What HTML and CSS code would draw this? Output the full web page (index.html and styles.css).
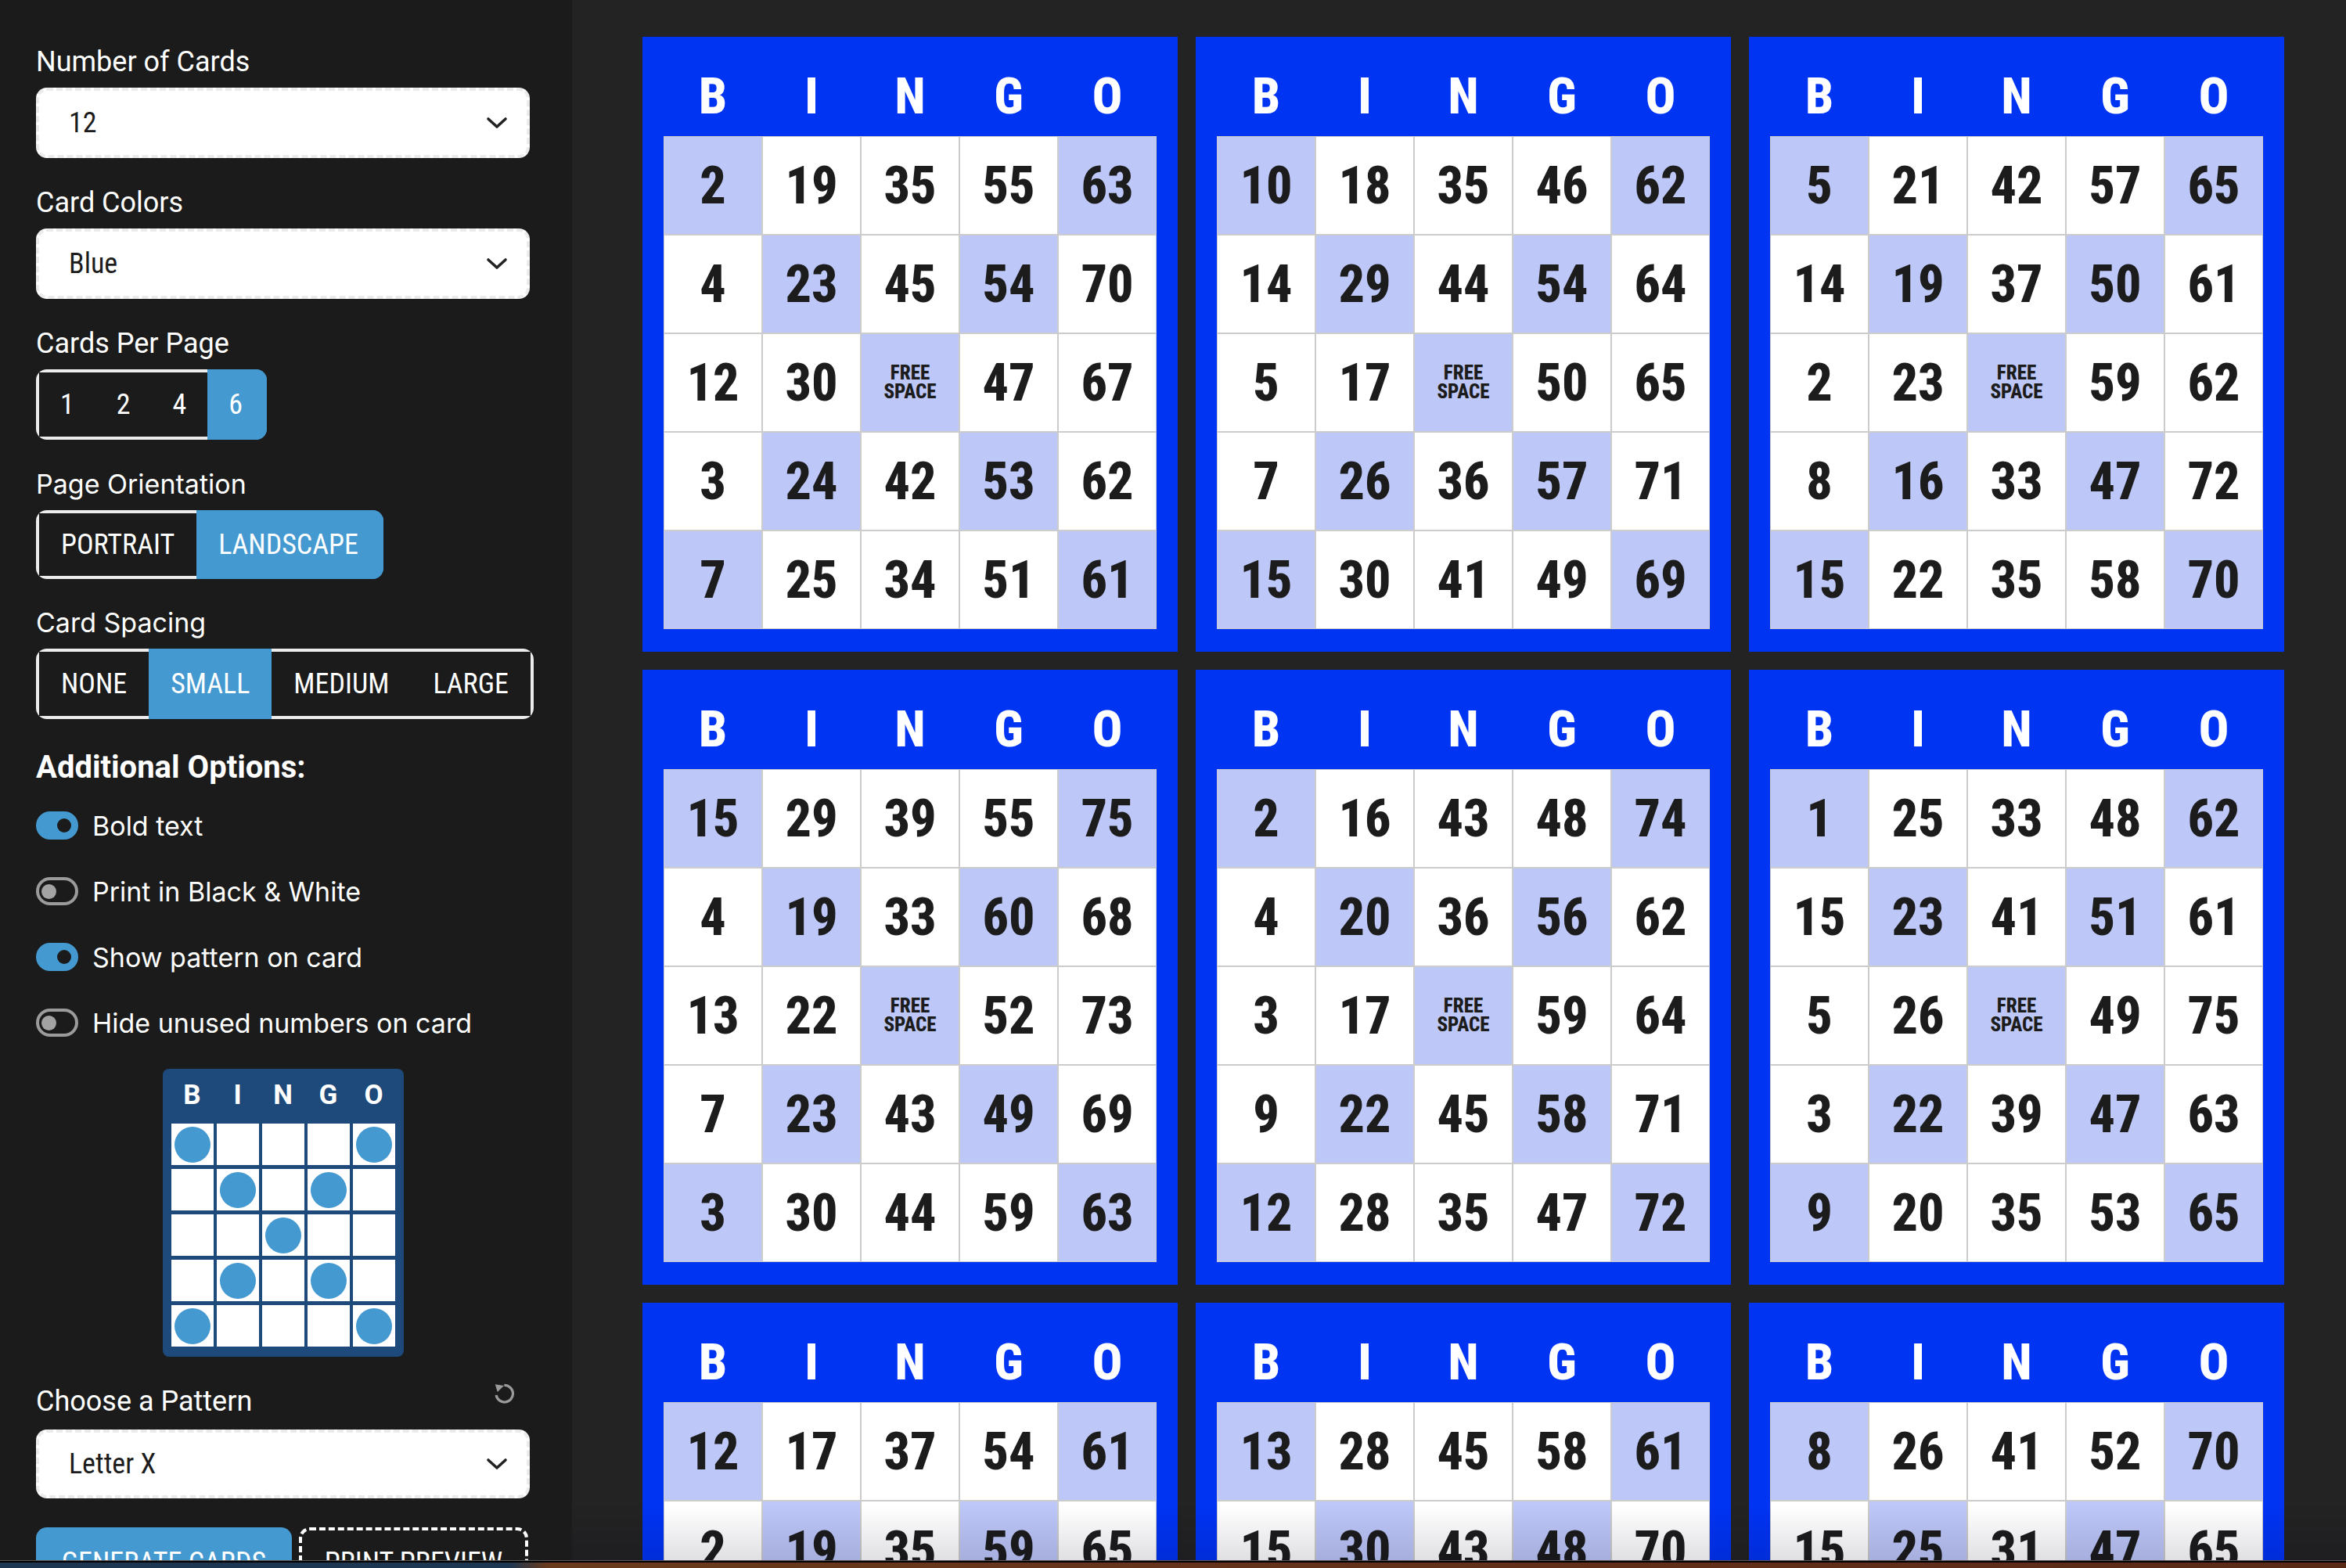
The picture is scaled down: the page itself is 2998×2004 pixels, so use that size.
FILE: index.html
```html
<!DOCTYPE html>
<html lang="en">
<head>
<meta charset="utf-8">
<title>Bingo Card Generator</title>
<link rel="stylesheet" href="styles.css">
</head>
<body>
<div class="app">
  <aside class="sidebar">
    <div class="field">
      <div class="label">Number of Cards</div>
      <div class="select"><span>12</span><svg class="chev" viewBox="0 0 28 16"><polyline points="3,3 14,13 25,3"/></svg></div>
    </div>
    <div class="field">
      <div class="label">Card Colors</div>
      <div class="select"><span>Blue</span><svg class="chev" viewBox="0 0 28 16"><polyline points="3,3 14,13 25,3"/></svg></div>
    </div>
    <div class="field">
      <div class="label">Cards Per Page</div>
      <div class="seg seg-num"><div class="b">1</div><div class="b">2</div><div class="b">4</div><div class="b on">6</div></div>
    </div>
    <div class="field field-tight">
      <div class="label inter">Page Orientation</div>
      <div class="seg seg-short"><div class="b">PORTRAIT</div><div class="b on">LANDSCAPE</div></div>
    </div>
    <div class="field field-wide">
      <div class="label inter">Card Spacing</div>
      <div class="seg"><div class="b">NONE</div><div class="b on">SMALL</div><div class="b">MEDIUM</div><div class="b">LARGE</div></div>
    </div>
    <div class="heading">Additional Options:</div>
    <div class="options">
      <div class="opt"><div class="tog on"><div class="knob"></div></div><span>Bold text</span></div>
      <div class="opt"><div class="tog"><div class="knob"></div></div><span>Print in Black &amp; White</span></div>
      <div class="opt"><div class="tog on"><div class="knob"></div></div><span>Show pattern on card</span></div>
      <div class="opt"><div class="tog"><div class="knob"></div></div><span>Hide unused numbers on card</span></div>
    </div>
    <div class="pattern">
      <div class="p-head"><span>B</span><span>I</span><span>N</span><span>G</span><span>O</span></div>
      <div class="p-grid">
        <div class="pc d"></div><div class="pc"></div><div class="pc"></div><div class="pc"></div><div class="pc d"></div>
        <div class="pc"></div><div class="pc d"></div><div class="pc"></div><div class="pc d"></div><div class="pc"></div>
        <div class="pc"></div><div class="pc"></div><div class="pc d"></div><div class="pc"></div><div class="pc"></div>
        <div class="pc"></div><div class="pc d"></div><div class="pc"></div><div class="pc d"></div><div class="pc"></div>
        <div class="pc d"></div><div class="pc"></div><div class="pc"></div><div class="pc"></div><div class="pc d"></div>
      </div>
    </div>
    <div class="label-row">
      <div class="label">Choose a Pattern</div>
      <svg class="reset" viewBox="0 0 24 24"><path d="M11.5 3.6 A8.6 8.6 0 1 1 3.3 13.6"/><polygon points="2.2,2.6 11.2,3.9 4.6,10.4"/></svg>
    </div>
    <div class="select"><span>Letter X</span><svg class="chev" viewBox="0 0 28 16"><polyline points="3,3 14,13 25,3"/></svg></div>
    <div class="actions">
      <div class="btn primary">GENERATE CARDS</div>
      <div class="btn ghost">PRINT PREVIEW</div>
    </div>
  </aside>

  <main class="main">
    <div class="cards">
      <div class="card">
        <div class="head"><span>B</span><span>I</span><span>N</span><span>G</span><span>O</span></div>
        <div class="grid">
          <div class="c h">2</div><div class="c">19</div><div class="c">35</div><div class="c">55</div><div class="c h">63</div>
          <div class="c">4</div><div class="c h">23</div><div class="c">45</div><div class="c h">54</div><div class="c">70</div>
          <div class="c">12</div><div class="c">30</div><div class="c h free">FREE<br>SPACE</div><div class="c">47</div><div class="c">67</div>
          <div class="c">3</div><div class="c h">24</div><div class="c">42</div><div class="c h">53</div><div class="c">62</div>
          <div class="c h">7</div><div class="c">25</div><div class="c">34</div><div class="c">51</div><div class="c h">61</div>
        </div>
      </div>
      <div class="card">
        <div class="head"><span>B</span><span>I</span><span>N</span><span>G</span><span>O</span></div>
        <div class="grid">
          <div class="c h">10</div><div class="c">18</div><div class="c">35</div><div class="c">46</div><div class="c h">62</div>
          <div class="c">14</div><div class="c h">29</div><div class="c">44</div><div class="c h">54</div><div class="c">64</div>
          <div class="c">5</div><div class="c">17</div><div class="c h free">FREE<br>SPACE</div><div class="c">50</div><div class="c">65</div>
          <div class="c">7</div><div class="c h">26</div><div class="c">36</div><div class="c h">57</div><div class="c">71</div>
          <div class="c h">15</div><div class="c">30</div><div class="c">41</div><div class="c">49</div><div class="c h">69</div>
        </div>
      </div>
      <div class="card">
        <div class="head"><span>B</span><span>I</span><span>N</span><span>G</span><span>O</span></div>
        <div class="grid">
          <div class="c h">5</div><div class="c">21</div><div class="c">42</div><div class="c">57</div><div class="c h">65</div>
          <div class="c">14</div><div class="c h">19</div><div class="c">37</div><div class="c h">50</div><div class="c">61</div>
          <div class="c">2</div><div class="c">23</div><div class="c h free">FREE<br>SPACE</div><div class="c">59</div><div class="c">62</div>
          <div class="c">8</div><div class="c h">16</div><div class="c">33</div><div class="c h">47</div><div class="c">72</div>
          <div class="c h">15</div><div class="c">22</div><div class="c">35</div><div class="c">58</div><div class="c h">70</div>
        </div>
      </div>
      <div class="card">
        <div class="head"><span>B</span><span>I</span><span>N</span><span>G</span><span>O</span></div>
        <div class="grid">
          <div class="c h">15</div><div class="c">29</div><div class="c">39</div><div class="c">55</div><div class="c h">75</div>
          <div class="c">4</div><div class="c h">19</div><div class="c">33</div><div class="c h">60</div><div class="c">68</div>
          <div class="c">13</div><div class="c">22</div><div class="c h free">FREE<br>SPACE</div><div class="c">52</div><div class="c">73</div>
          <div class="c">7</div><div class="c h">23</div><div class="c">43</div><div class="c h">49</div><div class="c">69</div>
          <div class="c h">3</div><div class="c">30</div><div class="c">44</div><div class="c">59</div><div class="c h">63</div>
        </div>
      </div>
      <div class="card">
        <div class="head"><span>B</span><span>I</span><span>N</span><span>G</span><span>O</span></div>
        <div class="grid">
          <div class="c h">2</div><div class="c">16</div><div class="c">43</div><div class="c">48</div><div class="c h">74</div>
          <div class="c">4</div><div class="c h">20</div><div class="c">36</div><div class="c h">56</div><div class="c">62</div>
          <div class="c">3</div><div class="c">17</div><div class="c h free">FREE<br>SPACE</div><div class="c">59</div><div class="c">64</div>
          <div class="c">9</div><div class="c h">22</div><div class="c">45</div><div class="c h">58</div><div class="c">71</div>
          <div class="c h">12</div><div class="c">28</div><div class="c">35</div><div class="c">47</div><div class="c h">72</div>
        </div>
      </div>
      <div class="card">
        <div class="head"><span>B</span><span>I</span><span>N</span><span>G</span><span>O</span></div>
        <div class="grid">
          <div class="c h">1</div><div class="c">25</div><div class="c">33</div><div class="c">48</div><div class="c h">62</div>
          <div class="c">15</div><div class="c h">23</div><div class="c">41</div><div class="c h">51</div><div class="c">61</div>
          <div class="c">5</div><div class="c">26</div><div class="c h free">FREE<br>SPACE</div><div class="c">49</div><div class="c">75</div>
          <div class="c">3</div><div class="c h">22</div><div class="c">39</div><div class="c h">47</div><div class="c">63</div>
          <div class="c h">9</div><div class="c">20</div><div class="c">35</div><div class="c">53</div><div class="c h">65</div>
        </div>
      </div>
      <div class="card">
        <div class="head"><span>B</span><span>I</span><span>N</span><span>G</span><span>O</span></div>
        <div class="grid">
          <div class="c h">12</div><div class="c">17</div><div class="c">37</div><div class="c">54</div><div class="c h">61</div>
          <div class="c">2</div><div class="c h">19</div><div class="c">35</div><div class="c h">59</div><div class="c">65</div>
          <div class="c">9</div><div class="c">24</div><div class="c h free">FREE<br>SPACE</div><div class="c">51</div><div class="c">70</div>
          <div class="c">6</div><div class="c h">28</div><div class="c">40</div><div class="c h">48</div><div class="c">66</div>
          <div class="c h">14</div><div class="c">21</div><div class="c">42</div><div class="c">57</div><div class="c h">73</div>
        </div>
      </div>
      <div class="card">
        <div class="head"><span>B</span><span>I</span><span>N</span><span>G</span><span>O</span></div>
        <div class="grid">
          <div class="c h">13</div><div class="c">28</div><div class="c">45</div><div class="c">58</div><div class="c h">61</div>
          <div class="c">15</div><div class="c h">30</div><div class="c">43</div><div class="c h">48</div><div class="c">70</div>
          <div class="c">4</div><div class="c">18</div><div class="c h free">FREE<br>SPACE</div><div class="c">55</div><div class="c">68</div>
          <div class="c">10</div><div class="c h">27</div><div class="c">38</div><div class="c h">46</div><div class="c">64</div>
          <div class="c h">1</div><div class="c">20</div><div class="c">33</div><div class="c">52</div><div class="c h">75</div>
        </div>
      </div>
      <div class="card">
        <div class="head"><span>B</span><span>I</span><span>N</span><span>G</span><span>O</span></div>
        <div class="grid">
          <div class="c h">8</div><div class="c">26</div><div class="c">41</div><div class="c">52</div><div class="c h">70</div>
          <div class="c">15</div><div class="c h">25</div><div class="c">31</div><div class="c h">47</div><div class="c">65</div>
          <div class="c">3</div><div class="c">18</div><div class="c h free">FREE<br>SPACE</div><div class="c">56</div><div class="c">72</div>
          <div class="c">11</div><div class="c h">29</div><div class="c">44</div><div class="c h">60</div><div class="c">67</div>
          <div class="c h">6</div><div class="c">16</div><div class="c">39</div><div class="c">49</div><div class="c h">62</div>
        </div>
      </div>
    </div>
  </main>
</div>
<div class="dock-shade"></div>
<div class="desktop"></div>
</body>
</html>
```

FILE: styles.css
```css
html, body {
  margin: 0;
  height: 100%;
  overflow: hidden;
  background: #232323;
}

.app {
  display: flex;
  height: 2004px;
}

/* ---------- sidebar ---------- */
.sidebar {
  width: 731px;
  flex: none;
  box-sizing: border-box;
  background: #1b1b1b;
  padding: 57px 54px 0 46px;
  color: #fff;
  font-family: Roboto, "Liberation Sans", sans-serif;
}

.field { margin-bottom: 35px; }
.field-tight { margin-bottom: 34px; }
.field-wide { margin-bottom: 40px; }

.label {
  font-size: 36px;
  line-height: 44px;
  margin-bottom: 11px;
}
.label.inter {
  font-family: Inter, Roboto, sans-serif;
  font-size: 34px;
}

.select {
  height: 90px;
  box-sizing: border-box;
  background: #fff;
  border: 4px dashed #ebebeb;
  border-radius: 14px;
  display: flex;
  align-items: center;
  justify-content: space-between;
  padding: 0 24px 0 38px;
  color: #1c1c1c;
  font-size: 36px;
  font-stretch: 87.5%;
}
.chev {
  width: 28px;
  height: 16px;
  fill: none;
  stroke: #222;
  stroke-width: 3.6;
  stroke-linecap: round;
  stroke-linejoin: round;
}

.seg {
  display: inline-flex;
  height: 90px;
  border-radius: 14px;
  overflow: hidden;
  vertical-align: top;
}
.seg-short { height: 88px; }
.seg .b {
  display: flex;
  align-items: center;
  justify-content: center;
  padding: 0 28px;
  border-top: 4px solid #ececec;
  border-bottom: 4px solid #ececec;
  font-size: 36px;
  font-stretch: 87.5%;
  color: #fff;
}
.seg-num .b { padding: 0 27px; }
.seg .b:first-child { border-left: 4px solid #ececec; }
.seg .b:last-child { border-right: 4px solid #ececec; }
.seg .b.on {
  background: #4499d1;
  border-color: #4499d1;
}

.heading {
  font-size: 40px;
  font-weight: 700;
  font-stretch: 88%;
  line-height: 44px;
  margin-bottom: 30px;
}

.options {
  display: flex;
  flex-direction: column;
  gap: 40px;
}
.opt {
  display: flex;
  align-items: center;
  gap: 18px;
  height: 44px;
  font-family: Inter, Roboto, sans-serif;
  font-size: 34px;
}
.tog {
  width: 54px;
  height: 36px;
  box-sizing: border-box;
  border-radius: 18px;
  border: 4px solid #9b9b9b;
  display: flex;
  align-items: center;
  padding: 0 3px;
  flex: none;
}
.tog .knob {
  width: 19px;
  height: 19px;
  border-radius: 50%;
  background: #a3a3a3;
}
.tog.on {
  background: #4499d1;
  border-color: #4499d1;
  justify-content: flex-end;
  padding: 0 5px;
}
.tog.on .knob {
  background: #1b1b1b;
  width: 18px;
  height: 18px;
}

.pattern {
  width: 308px;
  height: 368px;
  box-sizing: border-box;
  margin: 37px auto 0;
  background: #1d4a7b;
  border-radius: 8px;
  padding: 0 11px 13px;
}
.p-head {
  height: 70px;
  box-sizing: border-box;
  padding-top: 16px;
  display: grid;
  grid-template-columns: repeat(5, 54px);
  column-gap: 4px;
  font-size: 35px;
  font-weight: 700;
  line-height: 1;
  text-align: center;
}
.p-grid {
  display: grid;
  grid-template-columns: repeat(5, 54px);
  grid-auto-rows: 53px;
  gap: 5px 4px;
}
.pc {
  background: #fff;
  display: flex;
  align-items: center;
  justify-content: center;
}
.pc.d::after {
  content: "";
  width: 46px;
  height: 46px;
  border-radius: 50%;
  background: #4499d1;
}

.label-row {
  display: flex;
  justify-content: space-between;
  align-items: flex-start;
  margin-top: 35px;
  margin-bottom: 14px;
}
.label-row .label { margin-bottom: 0; }
.reset {
  width: 30px;
  height: 30px;
  margin: -3px 17px 0 0;
  fill: none;
  stroke: #9a9a9a;
  stroke-width: 2.6;
}
.reset polygon { fill: #9a9a9a; stroke: none; }

.label-row + .select { height: 88px; }

.actions {
  display: flex;
  gap: 9px;
  margin-top: 37px;
}
.btn {
  height: 90px;
  box-sizing: border-box;
  border-radius: 14px;
  display: flex;
  align-items: center;
  justify-content: center;
  font-size: 36px;
  font-stretch: 87.5%;
  color: #fff;
}
.btn.primary {
  width: 327px;
  background: #4499d1;
}
.btn.ghost {
  width: 293px;
  border: 4px dashed #fff;
}

/* ---------- cards ---------- */
.main {
  flex: 1;
  padding: 47px 0 0 90px;
  overflow: hidden;
}
.cards {
  display: grid;
  grid-template-columns: repeat(3, 684px);
  gap: 23px;
}
.card {
  background: #0034f3;
  padding: 0 27px 29px;
  font-family: Roboto, "Liberation Sans", sans-serif;
  font-weight: 800;
  font-stretch: 87.5%;
}
.head {
  height: 127px;
  box-sizing: border-box;
  padding-bottom: 18px;
  display: grid;
  grid-template-columns: repeat(5, 126px);
  align-items: end;
  text-align: center;
  color: #fff;
  font-size: 64px;
  line-height: 1;
}
.grid {
  display: grid;
  grid-template-columns: repeat(5, 126px);
  grid-auto-rows: 126px;
}
.c {
  box-sizing: border-box;
  border: 1.5px solid #cccccc;
  background: #fff;
  color: #1c1c1c;
  display: flex;
  align-items: center;
  justify-content: center;
  font-size: 66px;
}
.c.h { background: #bdc7f8; }
.c.free {
  font-size: 25px;
  line-height: 24px;
  text-align: center;
}

/* ---------- desktop peeking under the window ---------- */
.dock-shade {
  position: fixed;
  left: 731px;
  right: 0;
  bottom: 10px;
  height: 70px;
  background: linear-gradient(to bottom, rgba(0, 0, 30, 0), rgba(0, 0, 30, 0.12));
  pointer-events: none;
}
.desktop {
  position: fixed;
  left: 0;
  right: 0;
  bottom: 0;
  height: 10px;
  background:
    linear-gradient(to bottom, #5a5a5a 0, #5a5a5a 1px, #000 1px, #000 3px, transparent 3px),
    linear-gradient(to right, #1d3753 0, #1d3753 650px, #6a3b1c 700px, #63301a 60%, #5b2a17 100%);
}
```
